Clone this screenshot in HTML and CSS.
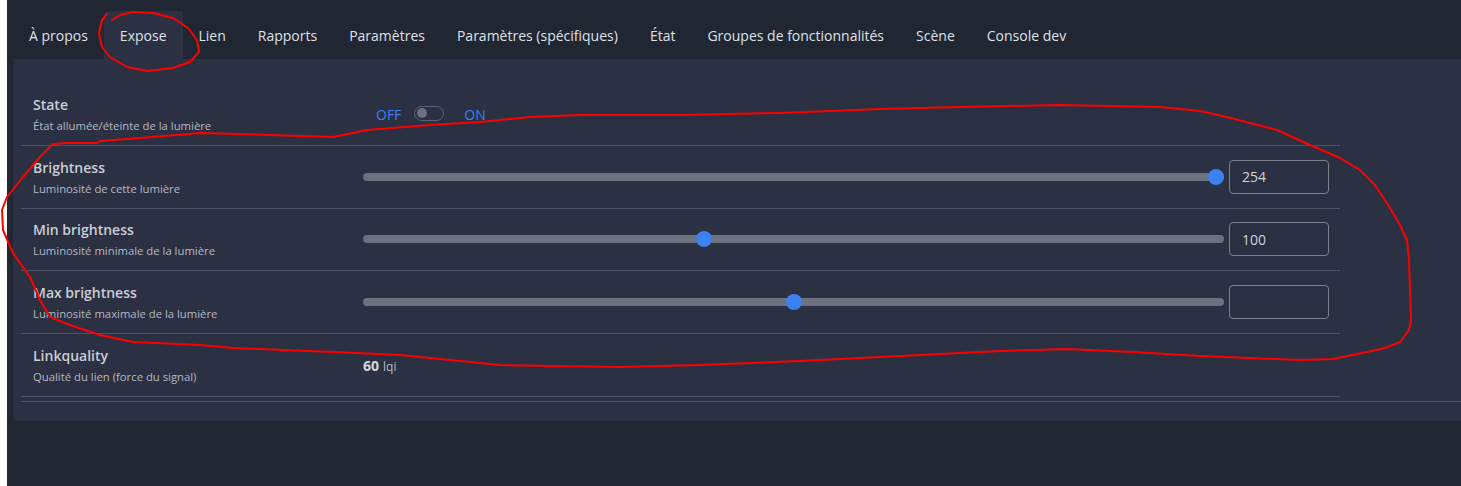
FILE: index.html
```html
<!DOCTYPE html>
<html lang="fr">
<head>
<meta charset="utf-8">
<title>Expose</title>
<link rel="stylesheet" href="styles.css">
</head>
<body>
<div class="app">
  <nav class="tabs">
    <a class="tab">À propos</a>
    <a class="tab active">Expose</a>
    <a class="tab">Lien</a>
    <a class="tab">Rapports</a>
    <a class="tab">Paramètres</a>
    <a class="tab">Paramètres (spécifiques)</a>
    <a class="tab">État</a>
    <a class="tab">Groupes de fonctionnalités</a>
    <a class="tab">Scène</a>
    <a class="tab">Console dev</a>
  </nav>
  <section class="card">
    <div class="table">
      <div class="row">
        <div class="label">
          <div class="title">State</div>
          <div class="desc">État allumée/éteinte de la lumière</div>
        </div>
        <div class="value">
          <div class="toggle">
            <span class="toggle-text off">OFF</span>
            <span class="switch"><span class="knob"></span></span>
            <span class="toggle-text on">ON</span>
          </div>
        </div>
      </div>
      <div class="row">
        <div class="label">
          <div class="title">Brightness</div>
          <div class="desc">Luminosité de cette lumière</div>
        </div>
        <div class="value">
          <input class="range" type="range" min="0" max="254" value="254">
          <input class="num" type="text" value="254">
        </div>
      </div>
      <div class="row">
        <div class="label">
          <div class="title">Min brightness</div>
          <div class="desc">Luminosité minimale de la lumière</div>
        </div>
        <div class="value">
          <input class="range" type="range" min="0" max="254" value="100">
          <input class="num" type="text" value="100">
        </div>
      </div>
      <div class="row">
        <div class="label">
          <div class="title">Max brightness</div>
          <div class="desc">Luminosité maximale de la lumière</div>
        </div>
        <div class="value">
          <input class="range" type="range" min="0" max="254" value="127">
          <input class="num" type="text" value="">
        </div>
      </div>
      <div class="row">
        <div class="label">
          <div class="title">Linkquality</div>
          <div class="desc">Qualité du lien (force du signal)</div>
        </div>
        <div class="value">
          <span class="lq-num">60</span><span class="lq-unit">lqi</span>
        </div>
      </div>
    </div>
    <div class="rule"></div>
  </section>
</div>
<svg class="annot" width="1461" height="486" viewBox="0 0 1461 486" xmlns="http://www.w3.org/2000/svg">
  <path d="M107 14 L102 20 L99 33 L102 47 L110 57 L127 67 L147 71 L173 68 L190 62 L199 52 L197 40 L188 28 L173 18 L153 13 L133 12 L120 15 L112 20" />
  <path d="M53 144 L67 143 L97 143 L100 141 L140 138 L200 133 L270 135 L333 137 L367 130 L430 125 L480 122 L530 117 L580 115 L680 115 L780 113 L880 109 L960 107 L1060 105 L1160 107 L1200 111 L1227 117 L1277 130 L1310 145 L1340 158 L1360 170 L1375 185 L1390 208 L1400 225 L1407 240 L1409 260 L1410 290 L1411 320 L1409 330 L1400 342 L1385 348 L1367 352 L1333 359 L1300 360 L1250 358 L1200 356 L1133 352 L1067 349 L1000 351 L900 356 L800 361 L700 365 L620 367 L550 366 L500 365 L400 355 L333 352 L233 348 L200 345 L133 342 L100 335 L70 325 L50 317 L40 300 L30 277 L13 253 L3 230 L2 210 L7 197 L23 177 L40 157 L53 144" />
</svg>
</body>
</html>
```
FILE: styles.css
```css
html, body {
  margin: 0;
  padding: 0;
  overflow: hidden;
  background: #ffffff;
  width: 1461px;
  height: 486px;
}

body {
  position: relative;
  font-family: "Open Sans", "Noto Sans", sans-serif;
}

.app {
  margin-left: 7px;
  height: 486px;
  background: #212633;
  overflow: hidden;
}

.tabs {
  display: flex;
  align-items: flex-end;
  height: 59px;
  padding-left: 6px;
  box-sizing: border-box;
}

.tab {
  display: flex;
  align-items: center;
  height: 48px;
  padding: 0 16px;
  color: #dee2e6;
  font-size: 14px;
  white-space: nowrap;
  border-radius: 4px 4px 0 0;
}

.tab.active {
  background: #2b3042;
}

.card {
  margin-left: 6px;
  width: 1600px;
  background: #2b3042;
  padding: 24px 0 19px 8px;
  border-radius: 0 0 0 4px;
}

.table {
  width: 1319px;
}

.row {
  display: grid;
  grid-template-columns: 342px 1fr;
  height: 62.75px;
  box-sizing: border-box;
  border-bottom: 1px solid #4e5466;
}

.label {
  padding-left: 12px;
  padding-top: 2px;
  display: flex;
  flex-direction: column;
  justify-content: center;
}

.title {
  color: #c9ced6;
  font-size: 14px;
  font-weight: 600;
  line-height: 20px;
}

.desc {
  color: #b4bac4;
  font-size: 11.3px;
  line-height: 18px;
  margin-top: 2px;
}

.value {
  display: flex;
  align-items: center;
  padding-right: 11px;
}

.toggle {
  display: flex;
  align-items: center;
  margin-left: 13px;
  margin-top: 2px;
}

.toggle-text {
  color: #3b82f6;
  font-size: 14px;
  line-height: 20px;
}

.switch {
  width: 30px;
  height: 15px;
  box-sizing: border-box;
  border: 1px solid #5d6373;
  border-radius: 8px;
  margin: -3px 20px 0 13px;
  display: flex;
  align-items: center;
  padding-left: 2px;
}

.knob {
  width: 10px;
  height: 10px;
  border-radius: 50%;
  background: #6b7180;
}

.range {
  -webkit-appearance: none;
  appearance: none;
  flex: 1;
  margin: 0;
  height: 16px;
  background: transparent;
}

.range::-webkit-slider-runnable-track {
  height: 8px;
  border-radius: 4px;
  background: #6b717e;
}

.range::-webkit-slider-thumb {
  -webkit-appearance: none;
  appearance: none;
  width: 16px;
  height: 16px;
  border-radius: 50%;
  background: #3b82f0;
  margin-top: -4px;
  border: none;
}

.num {
  width: 100px;
  height: 34px;
  box-sizing: border-box;
  margin-left: 5px;
  background: transparent;
  border: 1px solid #7b808b;
  border-radius: 4px;
  color: #ced4da;
  font-family: "Open Sans", "Noto Sans", sans-serif;
  font-size: 14px;
  padding: 0 12px;
  outline: none;
}

.lq-num {
  color: #d3d8df;
  font-size: 14px;
  font-weight: 700;
  margin-top: 2px;
}

.lq-unit {
  color: #b4bac4;
  font-size: 12px;
  margin-left: 4px;
  margin-top: 4px;
}

.rule {
  height: 1px;
  background: #4e5466;
  margin-top: 4px;
}

.annot {
  position: absolute;
  left: 0;
  top: 0;
  pointer-events: none;
}

.annot path {
  fill: none;
  stroke: #ff0000;
  stroke-width: 2;
  stroke-linejoin: round;
  stroke-linecap: round;
}
```
